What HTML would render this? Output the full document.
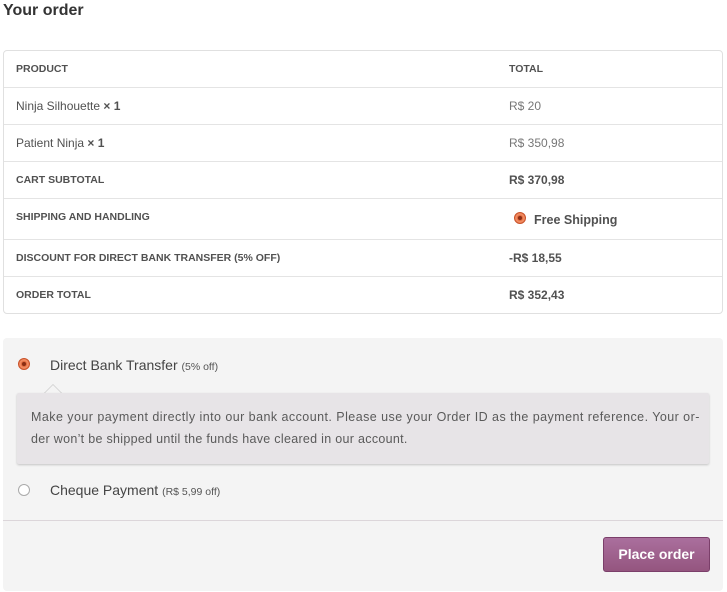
<!DOCTYPE html>
<html><head><style>
*{box-sizing:border-box;margin:0;padding:0}
body{width:727px;height:592px;background:#fff;font-family:"Liberation Sans",sans-serif;color:#515151;position:relative;overflow:hidden}
h3{position:absolute;left:3px;top:2px;font-size:16px;font-weight:bold;color:#333}
.tbl{position:absolute;left:3px;top:50px;width:720px;height:264px;border:1px solid #e0e0e0;border-radius:4px}
.row{position:absolute;left:0;width:718px;border-top:1px solid #e4e4e4;font-size:12px}
.row span{position:absolute}
.c1{left:12px}.c2{left:505px}
.b{font-weight:bold;font-size:10.5px;color:#515151}
.radio{position:absolute;width:12px;height:12px;border-radius:50%}
.on{background:#e06a3e;border:1px solid #c9532b;box-shadow:inset 0 0 0 2px #f08a60}
.on::after{content:"";position:absolute;left:3px;top:3px;width:4px;height:4px;border-radius:50%;background:#8a2e14}
.off{background:#fff;border:1px solid #aaa}
.pay{position:absolute;left:3px;top:338px;width:720px;height:253px;background:#f4f4f4;border-radius:4px}
.desc{position:absolute;left:14px;top:55px;width:692px;height:71px;background:#e7e4e7;border-radius:2px;box-shadow:0 1px 2px rgba(0,0,0,.2);font-size:12.5px;line-height:22px;padding:13px 14px;color:#5a5a5a;white-space:nowrap}
.btn{position:absolute;left:600px;top:199px;width:107px;height:35px;background:linear-gradient(#aa6f9d,#94557f);border:1px solid #7b3f6a;border-radius:3px;color:#fff;font-weight:bold;font-size:14px;text-align:center;line-height:33px}
</style></head><body>
<h3>Your order</h3>
<div class="tbl">
<div class="row" style="top:0;height:37px;border-top:none"><span class="c1 b" style="top:12px">PRODUCT</span><span class="c2 b" style="top:12px">TOTAL</span></div>
<div class="row" style="top:36px;height:37px"><span class="c1" style="top:11px">Ninja Silhouette <b>× 1</b></span><span class="c2" style="top:11px;color:#777">R$ 20</span></div>
<div class="row" style="top:73px;height:37px"><span class="c1" style="top:11px">Patient Ninja <b>× 1</b></span><span class="c2" style="top:11px;color:#777">R$ 350,98</span></div>
<div class="row" style="top:110px;height:37px"><span class="c1 b" style="top:12px">CART SUBTOTAL</span><span class="c2" style="top:11px;font-weight:bold">R$ 370,98</span></div>
<div class="row" style="top:147px;height:41px"><span class="c1 b" style="top:12px">SHIPPING AND HANDLING</span><span class="radio on" style="left:510px;top:13px"></span><span style="left:530px;top:14px;font-weight:bold;font-size:12.5px">Free Shipping</span></div>
<div class="row" style="top:188px;height:37px"><span class="c1 b" style="top:12px">DISCOUNT FOR DIRECT BANK TRANSFER (5% OFF)</span><span class="c2" style="top:11px;font-weight:bold">-R$ 18,55</span></div>
<div class="row" style="top:225px;height:37px"><span class="c1 b" style="top:12px">ORDER TOTAL</span><span class="c2" style="top:11px;font-weight:bold">R$ 352,43</span></div>
</div>
<div class="pay">
<span class="radio on" style="left:15px;top:20px"></span>
<div style="position:absolute;left:47px;top:19px;font-size:14px;color:#444">Direct Bank Transfer <span style="font-size:10.5px;color:#555">(5% off)</span></div>
<div style="position:absolute;left:41px;top:46px;width:0;height:0;border-left:9px solid transparent;border-right:9px solid transparent;border-bottom:9px solid #ccc"></div>
<div style="position:absolute;left:42px;top:47px;width:0;height:0;border-left:8px solid transparent;border-right:8px solid transparent;border-bottom:8px solid #f4f4f4"></div>
<div class="desc"><span style="letter-spacing:0.45px">Make your payment directly into our bank account. Please use your Order ID as the payment reference. Your or-</span><br><span style="letter-spacing:0.3px">der won’t be shipped until the funds have cleared in our account.</span></div>
<span class="radio off" style="left:15px;top:146px"></span>
<div style="position:absolute;left:47px;top:144px;font-size:14px;color:#444">Cheque Payment <span style="font-size:10.5px;color:#555">(R$ 5,99 off)</span></div>
<div style="position:absolute;left:0;top:182px;width:720px;border-top:1px solid #dcd6da"></div>
<div class="btn">Place order</div>
</div>
</body></html>
